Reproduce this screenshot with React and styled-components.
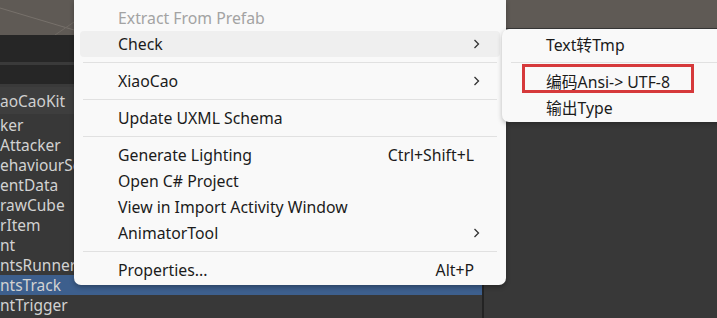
import styled, { createGlobalStyle } from "styled-components";

const Global = createGlobalStyle`
  html, body { margin: 0; padding: 0; background: #383838; }
  * { box-sizing: border-box; }
`;

const Screen = styled.div`
  position: relative;
  width: 717px;
  height: 318px;
  overflow: hidden;
  display: grid;
  grid-template-columns: 484px 1fr;
  background: #383838;
  font-family: "Noto Sans", "Noto Sans CJK SC", sans-serif;
`;

const LeftPane = styled.div`
  display: flex;
  flex-direction: column;
  border-right: 2px solid #232323;
`;

const SceneStrip = styled.div`
  height: ${(p) => p.h}px;
  background: #5f5a55;
  flex-shrink: 0;
  svg { display: block; }
`;

const DarkBar = styled.div`
  height: ${(p) => p.h}px;
  background: #262626;
  border-bottom: ${(p) => p.line}px solid #3a3a3a;
  flex-shrink: 0;
`;

const HeaderRow = styled.div`
  height: 27px;
  background: #3e3e3e;
  color: #d0d0d0;
  font-size: 15.5px;
  display: flex;
  align-items: center;
  margin-bottom: 1px;
`;

const Row = styled.div`
  height: 20px;
  flex-shrink: 0;
  display: flex;
  align-items: center;
  color: #d2d2d2;
  font-size: 15.5px;
  white-space: nowrap;
  background: ${(p) => (p.selected ? "#3d5f8d" : "transparent")};
`;

const RightPane = styled.div`
  display: flex;
  flex-direction: column;
`;

const Fill = styled.div`
  flex: 1;
  background: #383838;
`;

const Menu = styled.div`
  position: absolute;
  left: 74px;
  top: 0;
  width: 432px;
  padding: 5px 6px 2px;
  background: #f9f9f9;
  border-radius: 0 0 7px 7px;
  box-shadow: 0 2px 5px rgba(0, 0, 0, 0.3);
  z-index: 2;
`;

const SubMenu = styled.div`
  position: absolute;
  left: 502px;
  top: 29px;
  width: 230px;
  padding: 2px 0 2px 6px;
  background: #f9f9f9;
  border-radius: 7px;
  box-shadow: 0 2px 5px rgba(0, 0, 0, 0.25);
  z-index: 3;
`;

const Item = styled.div`
  height: 26px;
  display: flex;
  align-items: center;
  padding: 0 20px 0 38px;
  font-size: 15.8px;
  color: ${(p) => (p.disabled ? "#a3a3a3" : "#1b1b1b")};
  background: ${(p) => (p.active ? "#efefef" : "transparent")};
  border-radius: 4px;
  white-space: nowrap;
`;

const Label = styled.span`
  flex: 1;
`;

const Shortcut = styled.span`
  color: #1b1b1b;
  margin-right: 6px;
`;

const Sep = styled.div`
  height: 11px;
  display: flex;
  align-items: center;
  padding: 0 3px;
  &::after {
    content: "";
    flex: 1;
    height: 1px;
    background: #e1e1e1;
  }
`;

const Highlight = styled.div`
  position: absolute;
  left: 522px;
  top: 64px;
  width: 172px;
  height: 29px;
  border: 3px solid #d6393b;
  z-index: 4;
`;

const Chevron = () => (
  <svg width="7" height="10" viewBox="0 0 7 10">
    <polyline points="1.5,1 5.5,5 1.5,9" fill="none" stroke="#333" strokeWidth="1.3" />
  </svg>
);

const rows = [
  { t: "ker" },
  { t: "Attacker" },
  { t: "ehaviourSc" },
  { t: "entData" },
  { t: "rawCube" },
  { t: "rItem" },
  { t: "nt" },
  { t: "ntsRunner" },
  { t: "ntsTrack", selected: true },
  { t: "ntTrigger" },
];

const App = () => {
  return (
    <>
      <Global />
      <Screen>
        <LeftPane>
          <SceneStrip h={35}>
            <svg width="100%" height="35">
              <line x1="0" y1="8" x2="74" y2="30" stroke="#77716b" strokeWidth="1" />
              <line x1="55" y1="35" x2="74" y2="22" stroke="#6f6a64" strokeWidth="1" />
            </svg>
          </SceneStrip>
          <DarkBar h={30} line={3} />
          <DarkBar h={22} line={3} />
          <HeaderRow>aoCaoKit</HeaderRow>
          {rows.map((r) => (
            <Row key={r.t} selected={r.selected}>
              {r.t}
            </Row>
          ))}
        </LeftPane>
        <RightPane>
          <SceneStrip h={28} />
          <Fill />
        </RightPane>

        <Menu>
          <Item disabled>
            <Label>Extract From Prefab</Label>
          </Item>
          <Item active>
            <Label>Check</Label>
            <Chevron />
          </Item>
          <Sep />
          <Item>
            <Label>XiaoCao</Label>
            <Chevron />
          </Item>
          <Sep />
          <Item>
            <Label>Update UXML Schema</Label>
          </Item>
          <Sep />
          <Item>
            <Label>Generate Lighting</Label>
            <Shortcut>Ctrl+Shift+L</Shortcut>
          </Item>
          <Item>
            <Label>Open C# Project</Label>
          </Item>
          <Item>
            <Label>View in Import Activity Window</Label>
          </Item>
          <Item>
            <Label>AnimatorTool</Label>
            <Chevron />
          </Item>
          <Sep />
          <Item>
            <Label>Properties...</Label>
            <Shortcut>Alt+P</Shortcut>
          </Item>
        </Menu>

        <SubMenu>
          <Item>
            <Label>Text转Tmp</Label>
          </Item>
          <Sep />
          <Item>
            <Label>编码Ansi-&gt; UTF-8</Label>
          </Item>
          <Item>
            <Label>输出Type</Label>
          </Item>
        </SubMenu>
        <Highlight />
      </Screen>
    </>
  );
};

export default App;
